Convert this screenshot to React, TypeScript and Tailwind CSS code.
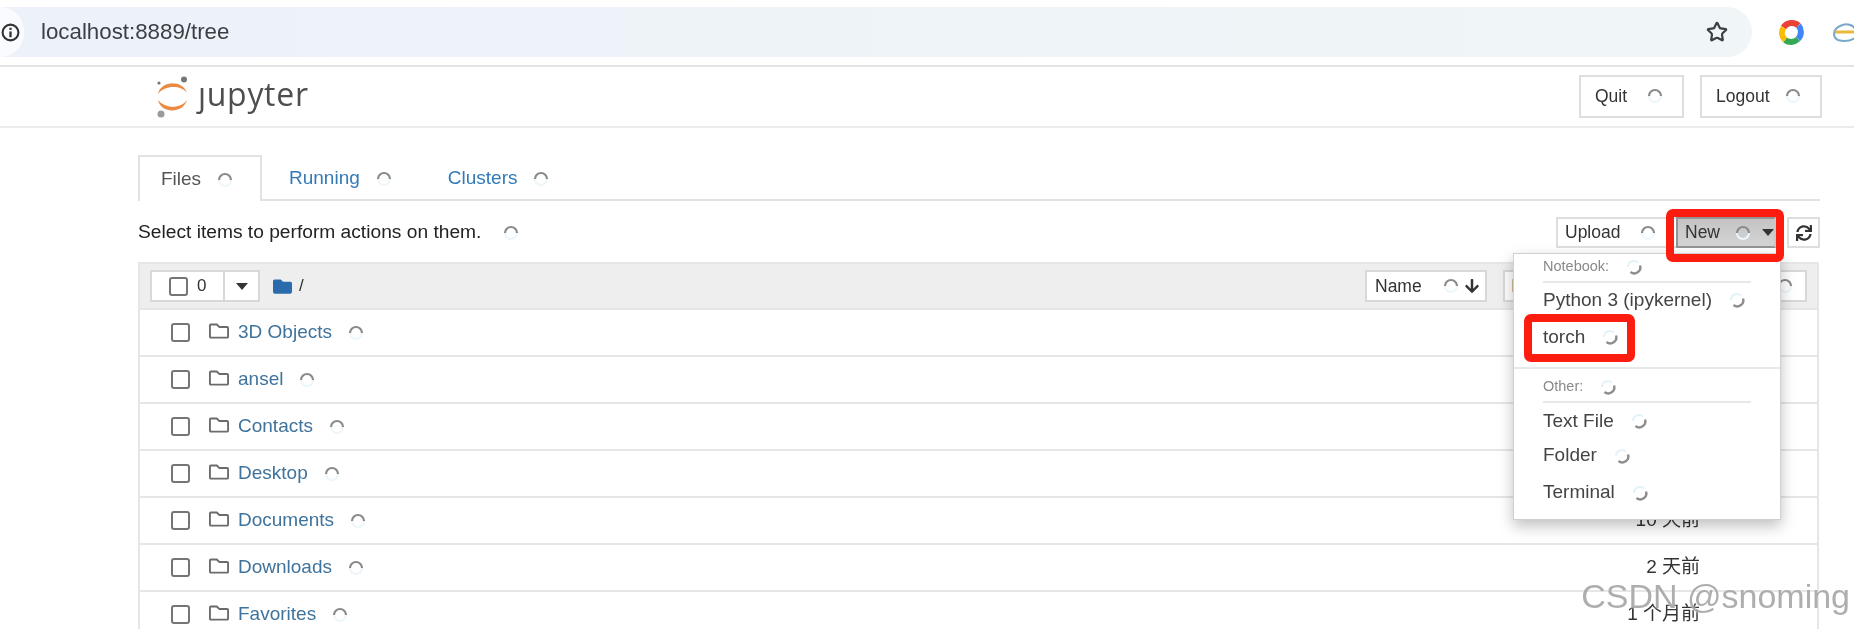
import { Star } from "lucide-react"
import { FaArrowDown, FaFolder, FaRegFolder, FaSync } from "react-icons/fa"

const Spinner = ({ down = false }: { down?: boolean }) => (
  <svg width="16" height="16" viewBox="0 0 16 16" fill="none" className="shrink-0">
    {down ? (
      <>
        <path d="M2 8a6 6 0 0 1 10-4.5" stroke="#e4f2fa" strokeWidth="2" />
        <path d="M14 6.5a6 6 0 0 1-9.5 6.5" stroke="#8d8d8d" strokeWidth="2.4" />
      </>
    ) : (
      <>
        <path d="M2 8a6 6 0 0 0 12 0" stroke="#ecf6fb" strokeWidth="2" />
        <path d="M2 8a6 6 0 0 1 12 0" stroke="#8a8a8a" strokeWidth="2.2" />
      </>
    )}
  </svg>
)

const Caret = () => (
  <svg width="12" height="7" viewBox="0 0 12 7">
    <path d="M0 0h12L6 7z" fill="#333" />
  </svg>
)

const JupyterLogo = () => (
  <svg width="34" height="42" viewBox="0 0 34 42" className="shrink-0">
    <path d="M2 18C5 4 27 4 31 17 25 9 9 9 2 18z" fill="#e98a45" />
    <path d="M2 24C9 33 25 33 31 24 27 38 5 38 2 24z" fill="#e98a45" />
    <circle cx="28" cy="3.5" r="3" fill="#767677" />
    <circle cx="3" cy="7" r="1.6" fill="#767677" />
    <circle cx="5" cy="38" r="3.5" fill="#9a9b9d" />
  </svg>
)

const ChromeRing = () => (
  <svg width="26" height="26" viewBox="0 0 26 26" className="shrink-0">
    <g fill="none" strokeWidth="6">
      <path d="M5.5 8.5A10 10 0 0 1 20.5 6.5" stroke="#ea4335" />
      <path d="M20.5 6.5A10 10 0 0 1 20 20" stroke="#4285f4" />
      <path d="M20 20A10 10 0 0 1 7 21" stroke="#34a853" />
      <path d="M7 21A10 10 0 0 1 5.5 8.5" stroke="#fbbc05" />
    </g>
  </svg>
)

const EdgeIcon = () => (
  <svg width="26" height="26" viewBox="0 0 26 26" fill="none" className="shrink-0">
    <path d="M24 12C22 5 14 4 8 7 1 10 0 18 6 21c6 2 12 1 17-2" stroke="#7ba7c9" strokeWidth="2" />
    <path d="M3 13h22" stroke="#e8b93c" strokeWidth="3" />
  </svg>
)

const HeaderButton = ({ label, gap, width }: { label: string; gap: string; width: string }) => (
  <div className={`flex items-center pl-[14px] border-2 border-[#dedede] h-[43px] text-[17.5px] text-[#333] ${gap} ${width}`}>
    {label}
    <Spinner />
  </div>
)

const rows = [
  { name: "3D Objects", date: "" },
  { name: "ansel", date: "" },
  { name: "Contacts", date: "" },
  { name: "Desktop", date: "" },
  { name: "Documents", date: "10 天前" },
  { name: "Downloads", date: "2 天前" },
  { name: "Favorites", date: "1 个月前" },
]

const MenuLabel = ({ label }: { label: string }) => (
  <div className="flex items-center gap-[17px] h-[27px] pb-[2px] text-[14.5px] text-[#8a8a8a]">
    {label}
    <Spinner down />
  </div>
)

const MenuItem = ({ label, height }: { label: string; height: string }) => (
  <div className={`flex items-center gap-[17px] text-[19px] text-[#444] ${height}`}>
    {label}
    <Spinner down />
  </div>
)

export default function App() {
  return (
    <div className="relative w-[1854px] h-[629px] overflow-hidden bg-white blur-[0.4px] font-['Liberation_Sans','Noto_Sans_CJK_SC',sans-serif]">
      {/* browser chrome */}
      <div className="h-[67px] pt-[7px] border-b-2 border-[#e4e4e4] flex items-start">
        <div className="w-[1752px] h-[50px] shrink-0 rounded-r-[25px] bg-gradient-to-r from-[#edf2fa] to-[#f0f5f7] flex items-center">
          <div className="w-[24px] h-[50px] rounded-r-full bg-white/70 flex items-center justify-center">
            <svg width="19" height="19" viewBox="0 0 18 18" fill="none" className="shrink-0 -ml-[4px]">
              <circle cx="9" cy="9" r="7.5" stroke="#333" strokeWidth="2" />
              <path d="M9 8v5.5" stroke="#333" strokeWidth="2.2" />
              <path d="M9 4.5v2" stroke="#333" strokeWidth="2.2" />
            </svg>
          </div>
          <span className="ml-[17px] text-[22.3px] text-[#3b3f44]">localhost:8889/tree</span>
          <Star size={22} strokeWidth={2.4} className="ml-auto mr-[24px] text-[#3c4043]" />
        </div>
        <div className="flex items-center h-[50px] ml-[26px] gap-[28px] shrink-0">
          <ChromeRing />
          <EdgeIcon />
        </div>
      </div>

      {/* notebook header */}
      <div className="h-[61px] border-b-2 border-[#ececec] flex items-center pl-[156px] pr-[32px]">
        <JupyterLogo />
        <span className="ml-[8px] -mt-[6px] text-[32px] leading-none text-[#4e4e4e] font-['Open_Sans',sans-serif] tracking-[0.7px]">ȷupyter</span>
        <div className="ml-auto flex items-center gap-[16px] -mt-[1px]">
          <HeaderButton label="Quit" gap="gap-[20px]" width="w-[105px]" />
          <HeaderButton label="Logout" gap="gap-[15px]" width="w-[122px]" />
        </div>
      </div>

      <div className="w-[1682px] ml-[138px]">
        {/* tabs */}
        <div className="mt-[27px] h-[46px] border-b-2 border-[#e2e2e2] flex items-end text-[19px]">
          <div className="h-[46px] w-[124px] -mb-[2px] bg-white border-2 border-b-0 border-[#e2e2e2] flex items-center gap-[16px] pl-[21px] pt-[1px] text-[#555]">
            Files
            <Spinner />
          </div>
          <div className="h-[44px] pt-[3px] ml-[27px] flex items-center gap-[16px] text-[#337ab7]">
            Running
            <Spinner />
          </div>
          <div className="h-[44px] pt-[3px] ml-[56px] flex items-center gap-[16px] text-[#337ab7]">
            Clusters
            <Spinner />
          </div>
        </div>

        {/* actions */}
        <div className="h-[61px] flex items-center pt-[2px]">
          <span className="text-[19.2px] text-[#222]">Select items to perform actions on them.</span>
          <span className="ml-[22px]">
            <Spinner />
          </span>
          <div className="ml-auto flex items-center gap-[3px]">
            <div className="h-[31px] w-[122px] border-2 border-[#dedede] flex items-center pl-[7px] gap-[20px] text-[17.5px] text-[#333]">
              Upload
              <Spinner />
            </div>
            <div className="h-[31px] w-[100px] -ml-[5px] bg-gradient-to-b from-[#c4c4c4] to-[#d4d4d4] border-2 border-[#949494] border-r-[#c8c8c8] flex items-center pl-[7px] text-[17.5px] text-[#333]">
              New
              <span className="ml-[15px]">
                <Spinner />
              </span>
              <span className="ml-[11px] flex">
                <Caret />
              </span>
            </div>
            <div className="ml-[8px] h-[31px] w-[33px] border-2 border-[#dedede] flex items-center justify-center text-[#333]">
              <FaSync size={16} />
            </div>
          </div>
        </div>

        {/* file list */}
        <div className="w-[1681px] h-[46px] bg-[#eeeeee] border-2 border-b-0 border-[#e6e6e6] flex items-center pl-[10px] pr-[10px]">
          <div className="h-[32px] w-[110px] bg-white border-2 border-[#d8d8d8] flex items-center">
            <div className="w-[73px] h-full border-r-2 border-[#d8d8d8] flex items-center pl-[17px] gap-[9px] text-[17px] text-[#333]">
              <span className="w-[19px] h-[19px] rounded-[3px] border-2 border-[#757575]" />0
            </div>
            <div className="flex-1 flex items-center justify-center">
              <Caret />
            </div>
          </div>
          <FaFolder size={19} className="ml-[13px] text-[#2a6bab]" />
          <span className="ml-[7px] text-[17px] text-[#333]">/</span>
          <div className="ml-auto flex items-center gap-[16px]">
            <div className="h-[32px] w-[122px] bg-white border-2 border-[#d8d8d8] flex items-center pl-[8px] text-[17.5px] text-[#333]">
              Name
              <span className="ml-[21px]">
                <Spinner />
              </span>
              <FaArrowDown size={16} className="ml-[5px]" />
            </div>
            <div className="h-[32px] w-[304px] bg-white border-2 border-[#d8d8d8] flex items-center pl-[6px] pr-[12px] justify-between text-[17.5px] text-[#b98f58]">
              L
              <Spinner />
            </div>
          </div>
        </div>
        <div className="w-[1681px] border-x-2 border-[#e6e6e6]">
          {rows.map((row) => (
            <div key={row.name} className="h-[47px] border-t-2 border-[#e6e6e6] flex items-center pl-[31px] text-[19px] text-[#3f739c]">
              <span className="w-[19px] h-[19px] rounded-[3px] border-2 border-[#757575] shrink-0" />
              <FaRegFolder size={20} className="ml-[19px] -mt-[3px] text-[#6b6b6b]" />
              <span className="ml-[9px]">{row.name}</span>
              <span className="ml-[16px]">
                <Spinner />
              </span>
              <span className="ml-auto mr-[117px] text-[#333] text-[19px]">{row.date}</span>
            </div>
          ))}
        </div>
      </div>

      {/* New dropdown */}
      <div className="absolute left-[1513px] top-[253px] w-[268px] h-[267px] bg-white border border-[#d0d0d0] shadow-[0_6px_14px_rgba(0,0,0,0.25)]">
        <div className="px-[29px]">
          <MenuLabel label="Notebook:" />
          <div className="border-t-2 border-[#e8e8e8] pt-[1px]">
            <MenuItem label="Python 3 (ipykernel)" height="h-[32px]" />
            <MenuItem label="torch" height="h-[42px]" />
          </div>
        </div>
        <div className="mt-[9px] border-t-2 border-[#e8e8e8] px-[29px] pt-[5px]">
          <MenuLabel label="Other:" />
          <div className="border-t-2 border-[#e8e8e8] pt-[2px]">
            <MenuItem label="Text File" height="h-[32px]" />
            <MenuItem label="Folder" height="h-[37px]" />
            <MenuItem label="Terminal" height="h-[37px]" />
          </div>
        </div>
      </div>

      {/* annotations */}
      <div className="absolute left-[1666px] top-[209px] w-[118px] h-[53px] rounded-[7px] border-8 border-[#fd1c10]" />
      <div className="absolute left-[1524px] top-[314px] w-[111px] h-[48px] rounded-[7px] border-8 border-[#fd1c10]" />

      {/* watermark */}
      <div className="absolute right-[4px] top-[577px] text-[34px] leading-[38px] text-[#8c8c8c]/70 [text-shadow:0_0_2px_white]">CSDN @snoming</div>
    </div>
  )
}
